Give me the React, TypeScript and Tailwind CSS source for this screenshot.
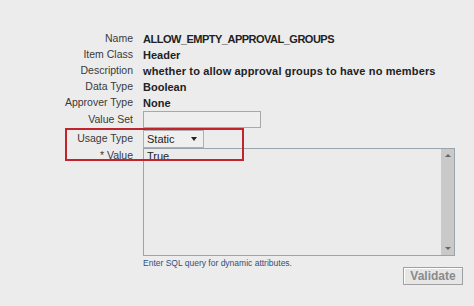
const baseFont = { fontFamily: '"Liberation Sans", Arial, sans-serif' };

const rows: { label: string; value: string; tracking: string }[] = [
	{ label: "Name", value: "ALLOW_EMPTY_APPROVAL_GROUPS", tracking: "tracking-[-0.5px]" },
	{ label: "Item Class", value: "Header", tracking: "" },
	{
		label: "Description",
		value: "whether to allow approval groups to have no members",
		tracking: "tracking-[0.14px]",
	},
	{ label: "Data Type", value: "Boolean", tracking: "" },
	{ label: "Approver Type", value: "None", tracking: "" },
];

const Label = ({ children }: { children: React.ReactNode }) => (
	<div className="w-[133px] shrink-0 whitespace-nowrap text-right text-[10.5px] text-[#3a3a3a]">
		{children}
	</div>
);

export default function App() {
	return (
		<div
			className="relative h-[306px] w-[474px] overflow-hidden bg-[#ececec]"
			style={baseFont}
		>
			<div className="flex flex-col pt-[31px]">
				{rows.map((row) => (
					<div key={row.label} className="flex h-[16px] items-center gap-[10px]">
						<Label>{row.label}</Label>
						<div className={`whitespace-nowrap text-[11px] font-bold text-[#222] ${row.tracking}`}>
							{row.value}
						</div>
					</div>
				))}
				<div className="flex h-[17px] items-center gap-[10px]">
					<Label>Value Set</Label>
					<div className="h-[17px] w-[118px] border border-[#a8a8a8] bg-[#eeeeee]" />
				</div>
				<div className="mt-[2px] flex h-[18px] items-center gap-[10px]">
					<Label>Usage Type</Label>
					<div className="flex h-[18px] w-[61px] items-center justify-between border border-[#b0b0b0] bg-[#efefef] pl-[3px] pr-[6px] text-[11px] text-[#222]">
						<span>Static</span>
						<span className="h-0 w-0 border-x-[3px] border-t-[4px] border-x-transparent border-t-[#222]" />
					</div>
				</div>
				<div className="flex items-start gap-[10px]">
					<div className="w-[133px] shrink-0 text-right text-[10.5px] leading-[14px] text-[#3a3a3a]">
						* Value
					</div>
					<div className="flex h-[108px] w-[312px] border border-[#9aa4ac] bg-[#ebebeb]">
						<div className="flex-1 pl-[3px] text-[11px] leading-[14px] text-[#222]">True</div>
						<div className="flex w-[13px] flex-col items-center justify-between bg-[#c9c9c9] py-[5px]">
							<span className="h-0 w-0 border-x-[3px] border-b-[3px] border-x-transparent border-b-[#666]" />
							<span className="h-0 w-0 border-x-[3px] border-t-[3px] border-x-transparent border-t-[#666]" />
						</div>
					</div>
				</div>
				<div className="mt-[2px] pl-[143px] text-[8.5px] leading-[10px] text-[#2e4f7e]">
					Enter SQL query for dynamic attributes.
				</div>
				<div className="-mt-[1px] flex justify-end pr-[11px]">
					<div className="flex h-[18px] w-[60px] items-center justify-center border border-[#a0a0a0] bg-[#e6e6e6] text-[12px] font-bold text-[#8a8a8a] shadow-[inset_1px_1px_0_#fff]">
						Validate
					</div>
				</div>
			</div>
			<div className="pointer-events-none absolute left-[65px] top-[128px] h-[33px] w-[179px] border-2 border-[#c0242c]" />
		</div>
	);
}
